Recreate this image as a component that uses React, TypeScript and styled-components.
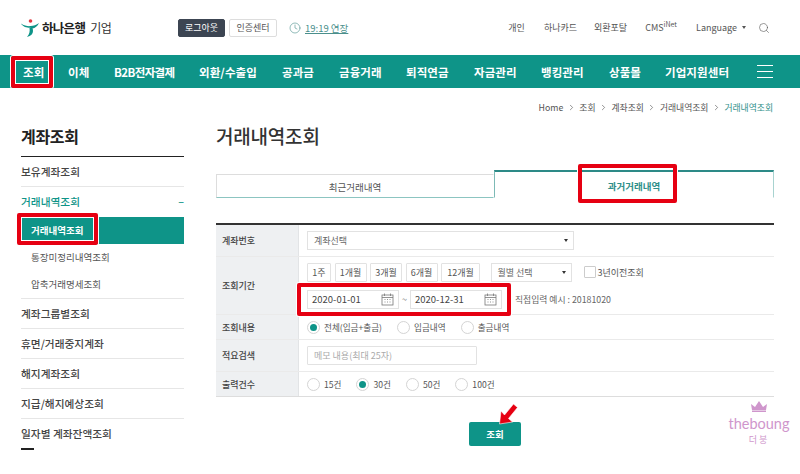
import React from 'react'
import styled, { createGlobalStyle } from 'styled-components'
import { Search, ChevronRight, Clock } from 'lucide-react'

const teal = '#0e9488'
const red = '#e60012'

const GlobalStyle = createGlobalStyle`
  html, body { margin: 0; padding: 0; background: #fff; }
  * { box-sizing: border-box; }
  body { font-family: "Noto Sans CJK KR", "Noto Sans", sans-serif; color: #333; }
`

// Page
const Page = styled.div`
  width: 800px;
  height: 474px;
  position: relative;
  overflow: hidden;
`

// Top header
const Header = styled.header`
  height: 55px;
  display: flex;
  align-items: center;
  padding: 0 30px 0 21px;
`
const Logo = styled.div`
  display: flex;
  align-items: center;
  width: 157px;
  gap: 1px;
`
const LogoName = styled.span`
  font-size: 12.5px;
  font-weight: 700;
  color: #222;
  letter-spacing: -0.7px;
`
const LogoKind = styled.span`
  font-size: 12px;
  color: #333;
  margin-left: 4px;
  letter-spacing: -0.6px;
`
const HeaderButton = styled.div<{ $dark?: boolean }>`
  height: 18px;
  width: ${(p) => (p.$dark ? '47px' : '48px')};
  margin-right: ${(p) => (p.$dark ? '4px' : '12px')};
  font-size: 9px;
  line-height: 16px;
  text-align: center;
  border-radius: 2px;
  color: ${(p) => (p.$dark ? '#fff' : '#555')};
  background: ${(p) => (p.$dark ? '#3c4552' : '#fff')};
  border: 1px solid ${(p) => (p.$dark ? '#3c4552' : '#ddd')};
`
const Timer = styled.div`
  display: flex;
  align-items: center;
  color: #4a8f8c;
  font-size: 9.5px;
  gap: 4px;
  text-decoration: underline;
`
const UtilNav = styled.nav`
  margin-left: auto;
  display: flex;
  align-items: center;
  font-size: 9px;
  color: #555;
`
const UtilItem = styled.span<{ $gap: number }>`
  margin-right: ${(p) => p.$gap}px;
  white-space: nowrap;
  sup {
    font-size: 7px;
    line-height: 0;
  }
`
const Caret = styled.span`
  display: inline-block;
  margin-left: 5px;
  vertical-align: 2px;
  border-left: 2.5px solid transparent;
  border-right: 2.5px solid transparent;
  border-top: 3px solid #555;
`

// Main green bar
const MainNav = styled.nav`
  height: 33px;
  background: ${teal};
  display: flex;
  align-items: center;
  padding-left: 23px;
  color: #fff;
  font-size: 11.5px;
  font-weight: 700;
`
const NavItem = styled.span<{ $width: number; $tight?: boolean }>`
  width: ${(p) => p.$width}px;
  white-space: nowrap;
  letter-spacing: ${(p) => (p.$tight ? '-0.6px' : '0.1px')};
`
const Burger = styled.div`
  width: 16px;
  height: 13px;
  border-top: 1px solid #fff;
  border-bottom: 1px solid #fff;
  position: relative;
  &::after {
    content: '';
    position: absolute;
    left: 0;
    right: 0;
    top: 5px;
    height: 1px;
    background: #fff;
  }
`

// Breadcrumb
const Crumbs = styled.div`
  height: 37px;
  padding: 1px 27px 0 0;
  display: flex;
  justify-content: flex-end;
  align-items: center;
  gap: 3.5px;
  font-size: 8.8px;
  color: #555;
`
const Crumb = styled.span<{ $current?: boolean }>`
  color: ${(p) => (p.$current ? '#2f8f8a' : '#555')};
`

const Body = styled.div`
  display: flex;
  padding-left: 21px;
`

// Left menu
const Side = styled.aside`
  width: 163px;
  margin-right: 32px;
`
const SideTitle = styled.h2`
  margin: 0;
  height: 31px;
  font-size: 16px;
  line-height: 22px;
  font-weight: 700;
  color: #222;
  letter-spacing: -0.3px;
  border-bottom: 1px solid #222;
  box-sizing: content-box;
`
const SideItem = styled.div<{ $open?: boolean; $noLine?: boolean }>`
  height: 30px;
  display: flex;
  align-items: center;
  justify-content: space-between;
  font-size: 10.7px;
  font-weight: 500;
  color: ${(p) => (p.$open ? teal : '#444')};
  border-bottom: 1px solid ${(p) => (p.$open || p.$noLine ? 'transparent' : '#e6e6e6')};
`
const SubList = styled.div`
  border-bottom: 1px solid #e6e6e6;
`
const SubItem = styled.div<{ $active?: boolean }>`
  height: 27px;
  padding-left: 10px;
  font-size: 9.5px;
  line-height: 27px;
  color: ${(p) => (p.$active ? '#fff' : '#555')};
  font-weight: ${(p) => (p.$active ? 700 : 400)};
  background: ${(p) => (p.$active ? teal : 'transparent')};
`
const SideEnd = styled.div`
  width: 13px;
  height: 2px;
  margin-top: -1px;
  background: #222;
`

// Content
const Content = styled.main`
  width: 558px;
`
const PageTitle = styled.h1`
  margin: 0;
  height: 42px;
  font-size: 19px;
  line-height: 22px;
  font-weight: 500;
  color: #333;
  letter-spacing: -0.2px;
`
const Tabs = styled.div`
  display: flex;
  height: 28px;
  align-items: flex-end;
  margin-top: 3px;
`
const Tab = styled.div<{ $active?: boolean }>`
  height: ${(p) => (p.$active ? '28px' : '24px')};
  width: ${(p) => (p.$active ? '280px' : '278px')};
  font-size: 9.5px;
  text-align: center;
  line-height: ${(p) => (p.$active ? '28px' : '24px')};
  font-weight: ${(p) => (p.$active ? 700 : 400)};
  color: ${(p) => (p.$active ? '#2f8f8a' : '#555')};
  border-top: ${(p) => (p.$active ? `2px solid #2d8a87` : '1px solid #ddd')};
  border-left: ${(p) => (p.$active ? `1px solid #7dbab6` : '1px solid #ddd')};
  border-right: 1px solid ${(p) => (p.$active ? '#a8d3d0' : 'transparent')};
  border-bottom: 1px solid ${(p) => (p.$active ? 'transparent' : '#8cc5c1')};
`
const Form = styled.div`
  margin-top: 25px;
  border-top: 2px solid #333;
  border-bottom: 1px solid #ddd;
`
const Row = styled.div<{ $h: number; $last?: boolean }>`
  display: flex;
  height: ${(p) => p.$h}px;
  border-bottom: ${(p) => (p.$last ? 'none' : '1px solid #eaeaea')};
`
const RowLabel = styled.div`
  width: 83px;
  flex: none;
  background: #eef0f2;
  border-right: 1px solid #e2e4e6;
  padding-left: 6px;
  display: flex;
  align-items: center;
  font-size: 9px;
  font-weight: 500;
  color: #444;
`
const RowBody = styled.div`
  flex: 1;
  padding-left: 8px;
  display: flex;
  flex-direction: column;
  justify-content: center;
  gap: 8px;
`
const Line = styled.div`
  display: flex;
  align-items: center;
  height: 19px;
  font-size: 9px;
  color: #555;
`
const SelectBox = styled.div<{ $width: number; $left?: number }>`
  width: ${(p) => p.$width}px;
  height: 19px;
  margin-left: ${(p) => p.$left || 0}px;
  border: 1px solid #e2e2e2;
  padding: 0 5px 0 6px;
  font-size: 9px;
  color: #666;
  display: flex;
  align-items: center;
  justify-content: space-between;
  &::after {
    content: '';
    border-left: 2.5px solid transparent;
    border-right: 2.5px solid transparent;
    border-top: 3px solid #333;
  }
`
const PeriodButton = styled.div<{ $width: number }>`
  width: ${(p) => p.$width}px;
  height: 19px;
  margin-right: 3.5px;
  border: 1px solid #e2e2e2;
  border-radius: 1px;
  text-align: center;
  font-size: 9px;
  line-height: 17px;
  color: #555;
`
const CheckBox = styled.div`
  width: 12px;
  height: 12px;
  margin: 0 2px 0 12px;
  border: 1px solid #ccc;
  border-radius: 1px;
`
const DateBox = styled.div`
  width: 92px;
  height: 19px;
  border: 1px solid #e2e2e2;
  padding: 0 4px;
  display: flex;
  align-items: center;
  justify-content: space-between;
  font-size: 9.5px;
  color: #444;
`
const Tilde = styled.span`
  width: 11px;
  text-align: center;
  font-size: 9px;
  color: #777;
`
const Hint = styled.span`
  margin-left: 13px;
  font-size: 8.8px;
  color: #666;
`
const Radios = styled.div`
  display: flex;
  align-items: center;
  font-size: 8.6px;
  color: #555;
`
const Radio = styled.div<{ $on?: boolean }>`
  width: 13px;
  height: 13px;
  margin-right: 4px;
  flex: none;
  border: 1px solid #d4d4d4;
  border-radius: 50%;
  display: flex;
  align-items: center;
  justify-content: center;
  &::after {
    content: '';
    width: 7px;
    height: 7px;
    border-radius: 50%;
    background: ${(p) => (p.$on ? teal : 'transparent')};
  }
`
const RadioText = styled.span<{ $gap: number }>`
  margin-right: ${(p) => p.$gap}px;
  white-space: nowrap;
`
const MemoInput = styled.div`
  width: 170px;
  height: 19px;
  border: 1px solid #e2e2e2;
  border-radius: 1px;
  padding-left: 6px;
  font-size: 9px;
  line-height: 17px;
  color: #aaa;
`
const Actions = styled.div`
  display: flex;
  justify-content: center;
  padding: 25px 0 0 0;
`
const SubmitButton = styled.div`
  width: 52px;
  height: 24px;
  border-radius: 2px;
  background: ${teal};
  color: #fff;
  font-size: 9.5px;
  font-weight: 700;
  line-height: 24px;
  text-align: center;
`

// Red notes drawn over the capture
const Mark = styled.div<{ $x: number; $y: number; $w: number; $h: number }>`
  position: absolute;
  left: ${(p) => p.$x}px;
  top: ${(p) => p.$y}px;
  width: ${(p) => p.$w}px;
  height: ${(p) => p.$h}px;
  border: 4px solid ${red};
  border-radius: 2px;
  box-shadow: 0 0 0 1px #fff;
`
const MarkInner = styled(Mark)`
  box-shadow: 0 0 0 1px #fff, inset 0 0 0 1px #fff;
`
const Arrow = styled.svg`
  position: absolute;
  left: 498px;
  top: 403px;
`
const Watermark = styled.div`
  position: absolute;
  left: 723px;
  top: 401px;
  width: 72px;
  display: flex;
  flex-direction: column;
  align-items: center;
  color: #cf96cc;
`
const MarkName = styled.div`
  font-family: "Lato", sans-serif;
  font-size: 14.5px;
  line-height: 17px;
  margin-top: 3px;
`
const MarkSub = styled.div`
  font-size: 9px;
  line-height: 12px;
  margin-top: 2px;
  letter-spacing: 2px;
`

const HanaMark = () => (
  <svg width="20" height="20" viewBox="0 0 20 20">
    <circle cx="9.5" cy="3" r="1.8" fill="#e2373f" />
    <path d="M0 5.5c3 2.5 7 2.8 9.5 2.6 3-.2 6-1 8.5-3-1.500 3.500-4 5-6.500 5.400L9 9.800C5.500 9.600 2 9 0 5.500z" fill="#0e9488" />
    <path d="M8.500 10c.5 3 .2 6-2.500 9 4-1 6-3 6-6 0-1.200-.2-2.200-.6-3z" fill="#0e9488" />
  </svg>
)

const CalendarIcon = () => (
  <svg width="13" height="13" viewBox="0 0 13 13" fill="none" stroke="#777" strokeWidth="0.8">
    <rect x="1" y="2" width="11" height="10" />
    <path d="M1 4.500h11M3.500 0.500v2.500M9.500 0.500v2.500" />
    <path d="M3.500 6.500h1M6 6.500h1M8.500 6.500h1M3.500 9h1M6 9h1M8.500 9h1" />
  </svg>
)

const navItems: [string, number][] = [
  ['조회', 45],
  ['이체', 46],
  ['B2B전자결제', 85],
  ['외환/수출입', 83],
  ['공과금', 57],
  ['금융거래', 67],
  ['퇴직연금', 68],
  ['자금관리', 67],
  ['뱅킹관리', 68],
  ['상품몰', 56],
  ['기업지원센터', 92],
]

const crumbs = ['Home', '조회', '계좌조회', '거래내역조회']

const App: React.FC = () => {
  return (
    <Page>
      <GlobalStyle />
      <Header>
        <Logo>
          <HanaMark />
          <LogoName>하나은행</LogoName>
          <LogoKind>기업</LogoKind>
        </Logo>
        <HeaderButton $dark>로그아웃</HeaderButton>
        <HeaderButton>인증센터</HeaderButton>
        <Timer>
          <Clock size={12} strokeWidth={1.2} />
          <span>19:19 연장</span>
        </Timer>
        <UtilNav>
          <UtilItem $gap={19}>개인</UtilItem>
          <UtilItem $gap={17}>하나카드</UtilItem>
          <UtilItem $gap={18}>외환포탈</UtilItem>
          <UtilItem $gap={19}>
            CMS<sup>iNet</sup>
          </UtilItem>
          <UtilItem $gap={12}>
            Language
            <Caret />
          </UtilItem>
          <Search size={12} strokeWidth={1.2} color="#555" />
        </UtilNav>
      </Header>

      <MainNav>
        {navItems.map(([label, width]) => (
          <NavItem key={label} $width={width} $tight={label.startsWith('B2B')}>
            {label}
          </NavItem>
        ))}
        <Burger />
      </MainNav>

      <Crumbs>
        {crumbs.map((c) => (
          <React.Fragment key={c}>
            <Crumb>{c}</Crumb>
            <ChevronRight size={9} strokeWidth={1.5} color="#444" />
          </React.Fragment>
        ))}
        <Crumb $current>거래내역조회</Crumb>
      </Crumbs>

      <Body>
        <Side>
          <SideTitle>계좌조회</SideTitle>
          <SideItem>보유계좌조회</SideItem>
          <SideItem $open>
            거래내역조회 <span>–</span>
          </SideItem>
          <SubList>
            <SubItem $active>거래내역조회</SubItem>
            <SubItem>통장미정리내역조회</SubItem>
            <SubItem>압축거래명세조회</SubItem>
          </SubList>
          <SideItem>계좌그룹별조회</SideItem>
          <SideItem>휴면/거래중지계좌</SideItem>
          <SideItem>해지계좌조회</SideItem>
          <SideItem>지급/해지예상조회</SideItem>
          <SideItem $noLine>일자별 계좌잔액조회</SideItem>
          <SideEnd />
        </Side>

        <Content>
          <PageTitle>거래내역조회</PageTitle>
          <Tabs>
            <Tab>최근거래내역</Tab>
            <Tab $active>과거거래내역</Tab>
          </Tabs>
          <Form>
            <Row $h={32}>
              <RowLabel>계좌번호</RowLabel>
              <RowBody>
                <SelectBox $width={267}>계좌선택</SelectBox>
              </RowBody>
            </Row>
            <Row $h={58}>
              <RowLabel>조회기간</RowLabel>
              <RowBody>
                <Line>
                  <PeriodButton $width={24}>1주</PeriodButton>
                  <PeriodButton $width={32}>1개월</PeriodButton>
                  <PeriodButton $width={32}>3개월</PeriodButton>
                  <PeriodButton $width={32}>6개월</PeriodButton>
                  <PeriodButton $width={39}>12개월</PeriodButton>
                  <SelectBox $width={81} $left={7}>월별 선택</SelectBox>
                  <CheckBox />
                  3년이전조회
                </Line>
                <Line>
                  <DateBox>
                    2020-01-01
                    <CalendarIcon />
                  </DateBox>
                  <Tilde>~</Tilde>
                  <DateBox>
                    2020-12-31
                    <CalendarIcon />
                  </DateBox>
                  <Hint>직접입력 예시 : 20181020</Hint>
                </Line>
              </RowBody>
            </Row>
            <Row $h={25}>
              <RowLabel>조회내용</RowLabel>
              <RowBody>
                <Radios>
                  <Radio $on />
                  <RadioText $gap={15}>전체(입금+출금)</RadioText>
                  <Radio />
                  <RadioText $gap={15}>입금내역</RadioText>
                  <Radio />
                  <RadioText $gap={0}>출금내역</RadioText>
                </Radios>
              </RowBody>
            </Row>
            <Row $h={32}>
              <RowLabel>적요검색</RowLabel>
              <RowBody>
                <MemoInput>메모 내용(최대 25자)</MemoInput>
              </RowBody>
            </Row>
            <Row $h={24} $last>
              <RowLabel>출력건수</RowLabel>
              <RowBody>
                <Radios>
                  <Radio />
                  <RadioText $gap={15}>15건</RadioText>
                  <Radio $on />
                  <RadioText $gap={15}>30건</RadioText>
                  <Radio />
                  <RadioText $gap={15}>50건</RadioText>
                  <Radio />
                  <RadioText $gap={0}>100건</RadioText>
                </Radios>
              </RowBody>
            </Row>
          </Form>
          <Actions>
            <SubmitButton>조회</SubmitButton>
          </Actions>
        </Content>
      </Body>

      <MarkInner $x={11} $y={56} $w={42} $h={32} />
      <MarkInner $x={17} $y={213} $w={81} $h={32} />
      <Mark $x={578} $y={164} $w={99} $h={39} />
      <Mark $x={297} $y={283} $w={214} $h={33} />
      <Arrow width="22" height="24" viewBox="0 0 22 24">
        <path d="M1.500 21 3 8l3.500 4 9-11 4 3.500-9 11 4 3.500z" fill={red} stroke="#fff" strokeWidth="0.6" />
      </Arrow>

      <Watermark>
        <svg width="18" height="11" viewBox="0 0 18 11" fill="#cf96cc">
          <path d="M1 3l4 3 4-6 4 6 4-3-1 6H2z" />
          <rect x="2" y="9.500" width="14" height="1.500" />
        </svg>
        <MarkName>theboung</MarkName>
        <MarkSub>더붕</MarkSub>
      </Watermark>
    </Page>
  )
}

export default App
